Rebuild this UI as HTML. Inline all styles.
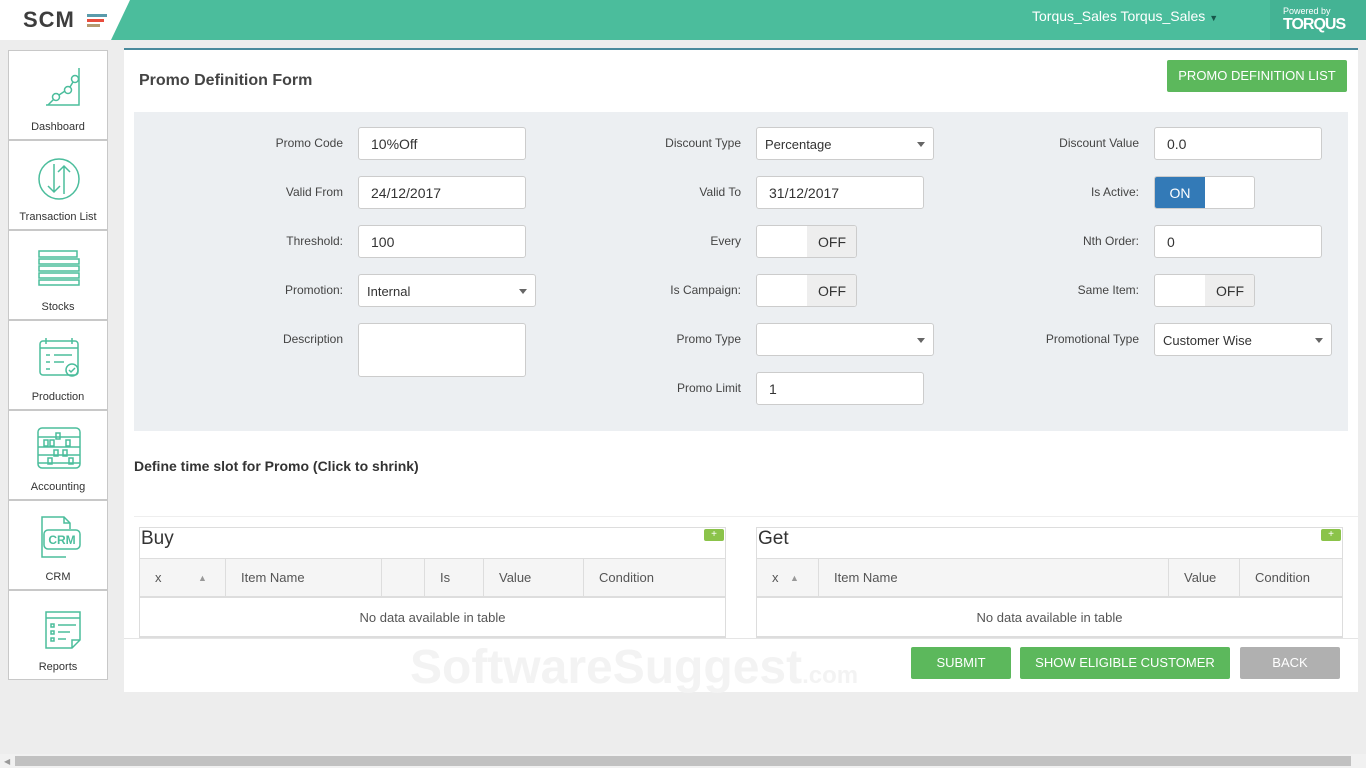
<!DOCTYPE html>
<html><head><meta charset="utf-8"><style>
*{box-sizing:border-box;margin:0;padding:0}
body{width:1366px;height:768px;overflow:hidden;background:#ededed;font-family:"Liberation Sans",sans-serif;color:#333;position:relative;font-size:13px}
.abs{position:absolute}
.hdr{left:0;top:0;width:1366px;height:40px;background:#4bbd9c}
.logo{left:0;top:0;width:130px;height:40px;background:#fff;clip-path:polygon(0 0,130px 0,111px 40px,0 40px)}
.tile{left:8px;width:100px;height:90px;background:#fff;border:1px solid #c8c8c8;text-align:center;font-size:11px;color:#333}
.tile span{position:absolute;left:0;right:0;bottom:0px}
.tile svg{position:absolute;left:25px;top:14px}
.panel{left:124px;top:48px;width:1234px;height:644px;background:#fff;border-top:2px solid #4a8a9c}
.gray{left:134px;top:112px;width:1214px;height:319px;background:#eceff2}
.lbl{width:200px;text-align:right;font-size:12px;color:#444}
.inp{height:33px;background:#fff;border:1px solid #ccc;border-radius:3px;padding:0 12px;line-height:33px;font-size:14px;color:#333}
.sel::after{content:"";position:absolute;right:8px;top:14px;border:4px solid transparent;border-top:5px solid #666}
.tog{width:101px;height:33px;border:1px solid #ccc;border-radius:3px;background:#fff;overflow:hidden}
.tog b{position:absolute;top:0;width:50px;height:31px;line-height:33px;text-align:center;font-weight:normal;font-size:14px}
.btn{height:32px;line-height:32px;color:#fff;text-align:center;font-size:13px;border-radius:2px;background:#5cb85c}
.tbl{border:1px solid #ddd;background:#fff}
.th{top:30px;height:40px;background:#f5f5f5;border-bottom:2px solid #ddd;border-right:1px solid #ddd;border-top:1px solid #ddd;line-height:38px;padding-left:15px;color:#555}
</style></head><body>
<div class="abs hdr"></div>
<div class="abs logo"></div>
<div class="abs" style="left:23px;top:7px;font-size:22px;font-weight:bold;color:#3d3d3d;letter-spacing:1px">SCM</div>
<div class="abs" style="left:87px;top:14px;width:20px;height:3px;background:#5a9bab"></div>
<div class="abs" style="left:87px;top:19px;width:17px;height:3px;background:#e84c3d"></div>
<div class="abs" style="left:87px;top:24px;width:13px;height:3px;background:#b49b70"></div>
<div class="abs" style="left:1032px;top:8px;color:#fff;font-size:14px">Torqus_Sales Torqus_Sales <span style="font-size:9px;color:#17574a">▼</span></div>
<div class="abs" style="left:1270px;top:0;width:96px;height:40px;background:#44b394"></div>
<div class="abs" style="left:1283px;top:6px;color:#fff;font-size:9px">Powered by</div>
<div class="abs" style="left:1283px;top:16px;color:#fff;font-size:16px;font-weight:bold;letter-spacing:-1px">TORQUS</div>

<div class="abs tile" style="top:50px"><svg width="50" height="50" viewBox="0 0 50 50" fill="none" stroke="#4bbd9c" stroke-width="1.5"><path d="M45 3V40H12"/><circle cx="22" cy="32" r="3.5"/><circle cx="34" cy="25" r="3.5"/><circle cx="41" cy="14" r="3.5"/><path d="M14 40l6-6M25 30l6-4M36 22l3-5"/></svg><span style="bottom:6px">Dashboard</span></div>
<div class="abs tile" style="top:140px"><svg width="50" height="50" viewBox="0 0 50 50" fill="none" stroke="#4bbd9c" stroke-width="1.5"><circle cx="25" cy="24" r="20"/><path d="M20 9v28M14 31l6 6 6-6M30 39V11M24 17l6-6 6 6"/></svg><span style="bottom:6px">Transaction List</span></div>
<div class="abs tile" style="top:230px"><svg width="50" height="50" viewBox="0 0 50 50" fill="none" stroke="#4bbd9c" stroke-width="1.5"><path d="M5 6h38v6H5zM5 14h40v5H5zM5 21h40v5H5zM5 28h40v5H5zM5 35h40v5H5z"/></svg><span style="bottom:6px">Stocks</span></div>
<div class="abs tile" style="top:320px"><svg width="50" height="50" viewBox="0 0 50 50" fill="none" stroke="#4bbd9c" stroke-width="1.5"><rect x="6" y="6" width="38" height="34" rx="3"/><path d="M6 13h38M12 3v6M38 3v6M12 20h4M12 27h4M12 34h4M20 20h18M20 27h10"/><circle cx="38" cy="35" r="6"/><path d="M35 35l2 2 4-4"/></svg><span style="bottom:6px">Production</span></div>
<div class="abs tile" style="top:410px"><svg width="50" height="50" viewBox="0 0 50 50" fill="none" stroke="#4bbd9c" stroke-width="1.5"><rect x="4" y="3" width="42" height="40" rx="4"/><path d="M4 12h42M4 22h42M4 30h42M4 38h42"/><rect x="22" y="8" width="4" height="6"/><rect x="10" y="15" width="4" height="6"/><rect x="16" y="15" width="4" height="6"/><rect x="32" y="15" width="4" height="6"/><rect x="20" y="25" width="4" height="6"/><rect x="29" y="25" width="4" height="6"/><rect x="14" y="33" width="4" height="6"/><rect x="35" y="33" width="4" height="6"/></svg><span style="bottom:6px">Accounting</span></div>
<div class="abs tile" style="top:500px"><svg width="50" height="50" viewBox="0 0 50 50" fill="none" stroke="#4bbd9c" stroke-width="1.5"><path d="M32 42H8V2h22l6 6v6"/><path d="M30 2v6h6"/><rect x="10" y="15" width="36" height="19" rx="4"/><text x="28" y="29" font-size="12" font-weight="bold" fill="#4bbd9c" stroke="none" text-anchor="middle" font-family="Liberation Sans">CRM</text></svg><span style="bottom:6px">CRM</span></div>
<div class="abs tile" style="top:590px"><svg width="50" height="50" viewBox="0 0 50 50" fill="none" stroke="#4bbd9c" stroke-width="1.5"><path d="M12 43h26l8-8V7H12zM12 13h34M46 35h-8v8"/><rect x="17" y="19" width="3" height="3"/><rect x="17" y="26" width="3" height="3"/><rect x="17" y="33" width="3" height="3"/><path d="M24 20h18M24 27h12M24 34h8"/></svg><span style="bottom:6px">Reports</span></div>

<div class="abs panel"></div>
<div class="abs" style="left:139px;top:72px;font-size:16px;font-weight:bold;color:#444">Promo Definition Form</div>
<div class="abs btn" style="left:1167px;top:60px;width:180px;height:32px">PROMO DEFINITION LIST</div>
<div class="abs gray"></div>

<div class="abs lbl" style="left:143px;top:136px">Promo Code</div>
<div class="abs inp" style="left:358px;top:127px;width:168px">10%Off</div>
<div class="abs lbl" style="left:143px;top:185px">Valid From</div>
<div class="abs inp" style="left:358px;top:176px;width:168px">24/12/2017</div>
<div class="abs lbl" style="left:143px;top:234px">Threshold:</div>
<div class="abs inp" style="left:358px;top:225px;width:168px">100</div>
<div class="abs lbl" style="left:143px;top:283px">Promotion:</div>
<div class="abs inp sel" style="left:358px;top:274px;width:178px;font-size:13px;padding-left:8px">Internal</div>
<div class="abs lbl" style="left:143px;top:332px">Description</div>
<div class="abs inp" style="left:358px;top:323px;width:168px;height:54px"></div>

<div class="abs lbl" style="left:541px;top:136px">Discount Type</div>
<div class="abs inp sel" style="left:756px;top:127px;width:178px;font-size:13px;padding-left:8px">Percentage</div>
<div class="abs lbl" style="left:541px;top:185px">Valid To</div>
<div class="abs inp" style="left:756px;top:176px;width:168px">31/12/2017</div>
<div class="abs lbl" style="left:541px;top:234px">Every</div>
<div class="abs tog" style="left:756px;top:225px"><b style="left:50px;background:#eee">OFF</b></div>
<div class="abs lbl" style="left:541px;top:283px">Is Campaign:</div>
<div class="abs tog" style="left:756px;top:274px"><b style="left:50px;background:#eee">OFF</b></div>
<div class="abs lbl" style="left:541px;top:332px">Promo Type</div>
<div class="abs inp sel" style="left:756px;top:323px;width:178px"></div>
<div class="abs lbl" style="left:541px;top:381px">Promo Limit</div>
<div class="abs inp" style="left:756px;top:372px;width:168px">1</div>

<div class="abs lbl" style="left:939px;top:136px">Discount Value</div>
<div class="abs inp" style="left:1154px;top:127px;width:168px">0.0</div>
<div class="abs lbl" style="left:939px;top:185px">Is Active:</div>
<div class="abs tog" style="left:1154px;top:176px"><b style="left:0;background:#337ab7;color:#fff">ON</b></div>
<div class="abs lbl" style="left:939px;top:234px">Nth Order:</div>
<div class="abs inp" style="left:1154px;top:225px;width:168px">0</div>
<div class="abs lbl" style="left:939px;top:283px">Same Item:</div>
<div class="abs tog" style="left:1154px;top:274px"><b style="left:50px;background:#eee">OFF</b></div>
<div class="abs lbl" style="left:939px;top:332px">Promotional Type</div>
<div class="abs inp sel" style="left:1154px;top:323px;width:178px;font-size:13px;padding-left:8px">Customer Wise</div>

<div class="abs" style="left:134px;top:458px;font-size:14px;font-weight:bold;color:#333">Define time slot for Promo (Click to shrink)</div>
<div class="abs" style="left:134px;top:516px;width:1224px;height:1px;background:#eee"></div>

<div class="abs tbl" style="left:139px;top:527px;width:587px;height:111px">
 <div class="abs" style="left:1px;top:0;font-size:19px">Buy</div>
 <div class="abs btn" style="left:564px;top:1px;width:20px;height:12px;line-height:11px;font-size:10px;background:#8bc34a">+</div>
 <div class="abs th" style="left:0;width:86px">x <span style="position:absolute;left:58px;font-size:9px;color:#999">▲</span></div>
 <div class="abs th" style="left:86px;width:156px">Item Name</div>
 <div class="abs th" style="left:242px;width:43px"></div>
 <div class="abs th" style="left:285px;width:59px">Is</div>
 <div class="abs th" style="left:344px;width:100px">Value</div>
 <div class="abs th" style="left:444px;width:141px;border-right:none">Condition</div>
 <div class="abs" style="left:0;top:70px;width:585px;height:40px;line-height:40px;text-align:center;color:#555;border-bottom:2px solid #ddd">No data available in table</div>
</div>
<div class="abs tbl" style="left:756px;top:527px;width:587px;height:111px">
 <div class="abs" style="left:1px;top:0;font-size:19px">Get</div>
 <div class="abs btn" style="left:564px;top:1px;width:20px;height:12px;line-height:11px;font-size:10px;background:#8bc34a">+</div>
 <div class="abs th" style="left:0;width:62px">x <span style="position:absolute;left:33px;font-size:9px;color:#999">▲</span></div>
 <div class="abs th" style="left:62px;width:350px">Item Name</div>
 <div class="abs th" style="left:412px;width:71px">Value</div>
 <div class="abs th" style="left:483px;width:102px;border-right:none">Condition</div>
 <div class="abs" style="left:0;top:70px;width:585px;height:40px;line-height:40px;text-align:center;color:#555;border-bottom:2px solid #ddd">No data available in table</div>
</div>
<div class="abs" style="left:124px;top:638px;width:1234px;height:1px;background:#e5e5e5"></div>
<div class="abs" style="left:410px;top:640px;font-size:48px;font-weight:bold;color:#f3f3f3">SoftwareSuggest<span style="font-size:24px">.com</span></div>
<div class="abs btn" style="left:911px;top:647px;width:100px">SUBMIT</div>
<div class="abs btn" style="left:1020px;top:647px;width:210px">SHOW ELIGIBLE CUSTOMER</div>
<div class="abs btn" style="left:1240px;top:647px;width:100px;background:#b0b0b0">BACK</div>

<div class="abs" style="left:0;top:754px;width:1366px;height:14px;background:#f1f1f1"></div>
<div class="abs" style="left:15px;top:756px;width:1336px;height:10px;background:#c1c1c1"></div>
<div class="abs" style="left:4px;top:757px;font-size:8px;color:#999">◀</div>
</body></html>
